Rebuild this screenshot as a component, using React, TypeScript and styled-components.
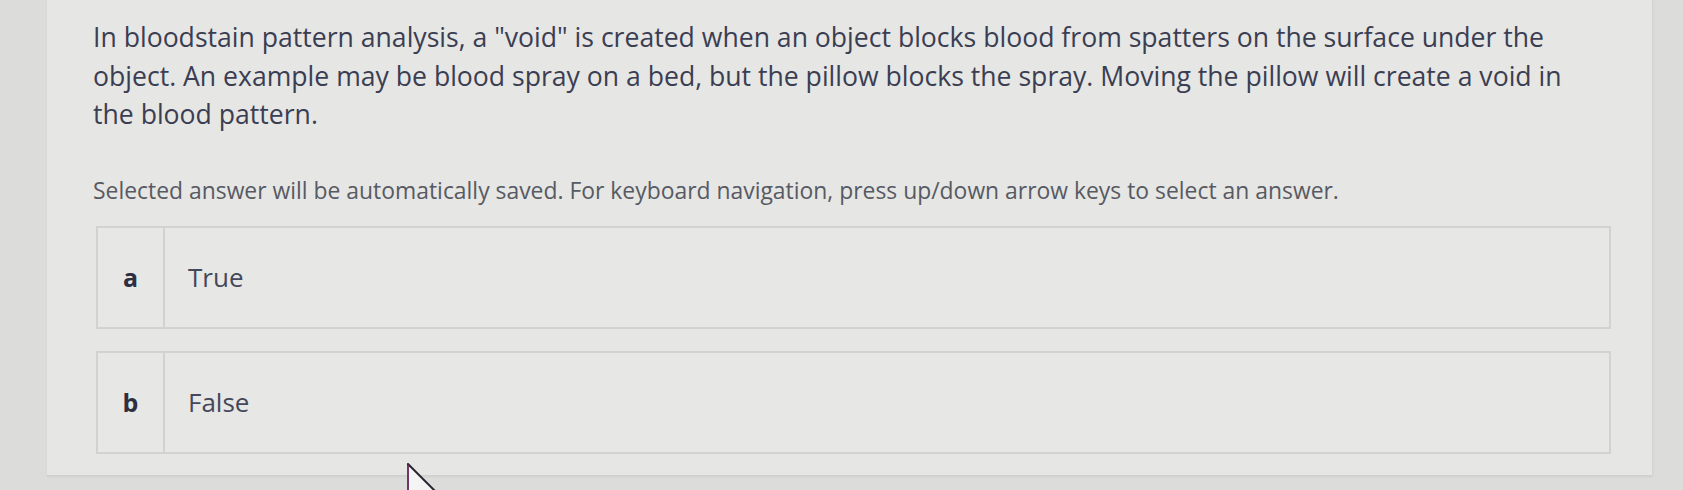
import styled, { createGlobalStyle } from 'styled-components';

const GlobalStyle = createGlobalStyle`
  html, body {
    margin: 0;
    padding: 0;
    background: #d9d9d7;
  }
  body {
    font-family: "Open Sans", "Liberation Sans", sans-serif;
    overflow: hidden;
  }
`;

const Page = styled.div`
  position: relative;
  width: 1683px;
  height: 490px;
  overflow: hidden;
  background: #dcdcda;
`;

const Card = styled.div`
  margin-left: 47px;
  width: 1606px;
  height: 476px;
  box-sizing: border-box;
  padding: 18px 41px 0 46px;
  background: #e6e6e4;
  border-right: 1px solid #d3d3d1;
  border-bottom: 1px solid #d0d0ce;
  box-shadow: 0 1px 2px rgba(0, 0, 0, 0.06);
`;

const Question = styled.p`
  margin: 0;
  padding-right: 24px;
  font-size: 26.6px;
  line-height: 38.5px;
  color: #3b3e52;
`;

const Hint = styled.p`
  margin: 42px 0 0;
  font-size: 22.9px;
  line-height: 30px;
  color: #575a63;
`;

const Options = styled.div`
  display: flex;
  flex-direction: column;
  gap: 22px;
  margin-top: 20px;
  margin-left: 3px;
`;

const Option = styled.div`
  display: flex;
  height: 103px;
  box-sizing: border-box;
  border: 2px solid #d2d2d0;
  background: #e7e7e5;
`;

const Letter = styled.div`
  width: 65px;
  flex-shrink: 0;
  display: flex;
  align-items: center;
  justify-content: center;
  border-right: 2px solid #d2d2d0;
  font-size: 25px;
  font-weight: 700;
  color: #2e3042;
`;

const Answer = styled.div`
  display: flex;
  align-items: center;
  padding-left: 23px;
  font-size: 26px;
  color: #45485a;
`;

const Cursor = styled.svg`
  position: absolute;
  left: 406px;
  top: 463px;
`;

const options = [
  { key: 'a', label: 'True' },
  { key: 'b', label: 'False' },
];

export default function App() {
  return (
    <Page>
      <GlobalStyle />
      <Card>
        <Question>
          In bloodstain pattern analysis, a "void" is created when an object blocks blood from
          spatters on the surface under the object. An example may be blood spray on a bed, but
          the pillow blocks the spray. Moving the pillow will create a void in the blood pattern.
        </Question>
        <Hint>
          Selected answer will be automatically saved. For keyboard navigation, press up/down
          arrow keys to select an answer.
        </Hint>
        <Options>
          {options.map((o) => (
            <Option key={o.key}>
              <Letter>{o.key}</Letter>
              <Answer>{o.label}</Answer>
            </Option>
          ))}
        </Options>
      </Card>
      <Cursor width="40" height="48" viewBox="0 0 40 48">
        <path
          d="M2 1 L2 40 L11 31 L17 45 L23 42 L17 29 L30 29 Z"
          fill="#f4f4f4"
          stroke="#2a2530"
          strokeWidth="2"
          strokeLinejoin="round"
        />
        <path d="M2 2 L2 40" stroke="#8a3d7a" strokeWidth="1.5" />
      </Cursor>
    </Page>
  );
}
